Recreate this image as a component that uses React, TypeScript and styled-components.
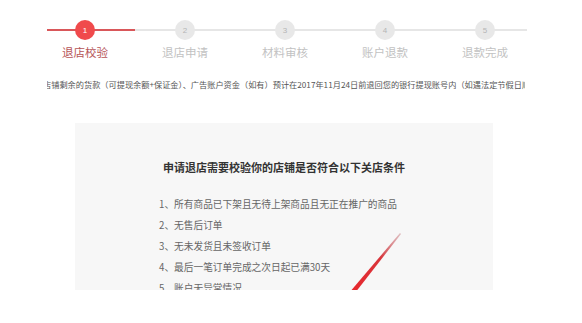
import React from "react";
import styled, { createGlobalStyle } from "styled-components";

const Global = createGlobalStyle`
  html, body { margin: 0; padding: 0; background: #fff; }
  body { font-family: "Noto Sans CJK SC", "Noto Sans", sans-serif; width: 582px; height: 323px; overflow: hidden; }
`;

const Page = styled.div`
  width: 582px;
  height: 323px;
  display: flex;
  flex-direction: column;
  overflow: hidden;
`;

const Steps = styled.div`
  position: relative;
  margin: 20px 0 0 35px;
  width: 500px;
  display: flex;
  &::before {
    content: "";
    position: absolute;
    left: 12px;
    right: 8px;
    top: 9px;
    height: 2px;
    background: #e6e6e6;
  }
  &::after {
    content: "";
    position: absolute;
    left: 12px;
    width: 88px;
    top: 9px;
    height: 2px;
    background: #d9575a;
  }
`;

const Step = styled.div`
  position: relative;
  z-index: 1;
  width: 100px;
  display: flex;
  flex-direction: column;
  align-items: center;
`;

const Dot = styled.div<{ $active?: boolean }>`
  width: 20px;
  height: 20px;
  border-radius: 50%;
  background: ${(p) => (p.$active ? "#f04a4c" : "#e8e8e8")};
  color: ${(p) => (p.$active ? "#fff" : "#b5b5b5")};
  font-family: "Liberation Sans", Arial, sans-serif;
  font-size: 8px;
  display: flex;
  align-items: center;
  justify-content: center;
`;

const StepLabel = styled.div<{ $active?: boolean }>`
  margin-top: 4px;
  font-size: 11.5px;
  line-height: 16px;
  color: ${(p) => (p.$active ? "#b65457" : "#c2c2c2")};
  white-space: nowrap;
`;

const Notice = styled.div`
  margin: 18px 0 0 47px;
  width: 478px;
  height: 12px;
  overflow: hidden;
  white-space: nowrap;
  font-size: 8.2px;
  line-height: 12px;
  color: #555;
  text-indent: -4px;
`;

const Panel = styled.div`
  position: relative;
  margin: 33px 0 0 75px;
  width: 418px;
  height: 167px;
  overflow: hidden;
  background: #f7f7f7;
  display: flex;
  flex-direction: column;
`;

const Title = styled.div`
  margin-top: 36px;
  text-align: center;
  font-size: 11px;
  font-weight: bold;
  line-height: 16px;
  color: #333;
`;

const List = styled.ol`
  list-style: none;
  margin: 19px 0 0 84px;
  padding: 0;
`;

const Item = styled.li`
  font-size: 9.7px;
  line-height: 21px;
  color: #666;
  white-space: nowrap;
`;

const Stroke = styled.svg`
  position: absolute;
  left: 270px;
  top: 105px;
  width: 60px;
  height: 65px;
`;

const steps = ["退店校验", "退店申请", "材料审核", "账户退款", "退款完成"];
const items = [
  "1、所有商品已下架且无待上架商品且无正在推广的商品",
  "2、无售后订单",
  "3、无未发货且未签收订单",
  "4、最后一笔订单完成之次日起已满30天",
  "5、账户无异常情况",
];

export default function App() {
  return (
    <Page>
      <Global />
      <Steps>
        {steps.map((s, i) => (
          <Step key={s}>
            <Dot $active={i === 0}>{i + 1}</Dot>
            <StepLabel $active={i === 0}>{s}</StepLabel>
          </Step>
        ))}
      </Steps>
      <Notice>
        店铺剩余的货款（可提现余额+保证金）、广告账户资金（如有）预计在2017年11月24日前退回您的银行提现账号内（如遇法定节假日顺延）
      </Notice>
      <Panel>
        <Title>申请退店需要校验你的店铺是否符合以下关店条件</Title>
        <List>
          {items.map((t) => (
            <Item key={t}>{t}</Item>
          ))}
        </List>
        <Stroke viewBox="0 0 60 65">
          <defs>
            <linearGradient id="rg" x1="1" y1="0" x2="0" y2="1">
              <stop offset="0" stopColor="#c98a8f" stopOpacity="0.5" />
              <stop offset="0.4" stopColor="#d8353b" />
              <stop offset="1" stopColor="#e8262c" />
            </linearGradient>
          </defs>
          <polygon points="55,5 56,6 10,65 4,65" fill="url(#rg)" />
        </Stroke>
      </Panel>
    </Page>
  );
}
